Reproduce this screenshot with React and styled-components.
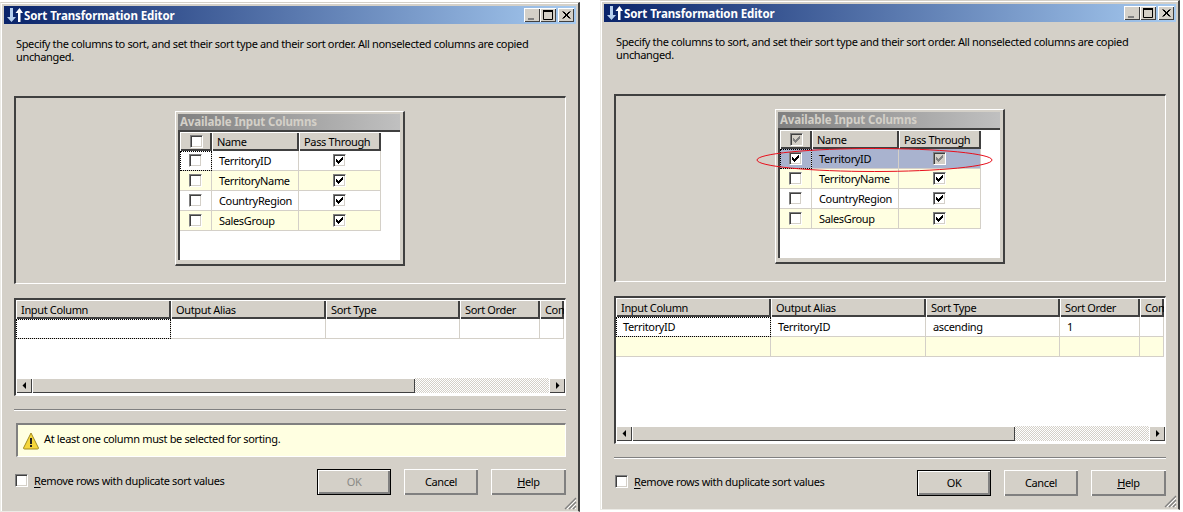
import React from "react";
import styled, { createGlobalStyle, css } from "styled-components";

const Global = createGlobalStyle`
  html, body { margin: 0; padding: 0; background: #fff; }
  body { font-family: "Noto Sans", "Open Sans", sans-serif; font-size: 11px; letter-spacing: -0.35px; color: #000; }
`;

const FACE = "#d4d0c8";
const DARK = "#404040";
const MID = "#808080";
const YELLOW = "#ffffe1";
const LINE = "#d4d0c8";

const Page = styled.div`
  display: flex;
  width: 1183px;
  height: 512px;
  overflow: hidden;
`;
const Dialog = styled.div`
  position: relative;
  box-sizing: border-box;
  flex: none;
  width: 580px;
  height: 510px;
  margin-top: ${(p) => p.$top}px;
  margin-right: 20px;
  padding: 3px 2px 0 3px;
  background: ${FACE};
  border-top: 1px solid ${FACE};
  border-left: 1px solid #ecebe6;
  border-right: 2px solid ${DARK};
  border-bottom: 1px solid #ecebe6;
  box-shadow: inset 1px 1px 0 #fff;
`;
const TitleBar = styled.div`
  display: flex;
  align-items: center;
  height: 18px;
  padding: 0 2px 0 3px;
  background: linear-gradient(90deg, #0a246a 0%, #a6caf0 100%);
  color: #fff;
  font-weight: 700;
  font-size: 11.5px;
  letter-spacing: -0.1px;
  gap: 1px;
`;
const TitleText = styled.span`
  flex: 1;
  white-space: nowrap;
`;
const CtlGroup = styled.div`
  display: flex;
`;
const CtlBtn = styled.div`
  box-sizing: border-box;
  width: 16px;
  height: 14px;
  margin-left: ${(p) => (p.$gap ? 2 : 0)}px;
  background: ${FACE};
  box-shadow: inset 1px 1px 0 #fff, inset -1px -1px 0 ${DARK};
  display: flex;
  align-items: center;
  justify-content: center;
`;
const Content = styled.div`
  padding: 13px 10px 0 10px;
`;
const Intro = styled.p`
  margin: 0 0 33px 2px;
  line-height: 13px;
  height: 26px;
  width: 535px;
`;
const Group = styled.div`
  box-sizing: border-box;
  height: 188px;
  padding: 13px 1px 0 0;
  display: flex;
  justify-content: center;
  align-items: flex-start;
  border-top: 2px solid ${DARK};
  border-left: 2px solid ${DARK};
  border-right: 1px solid #fff;
  border-bottom: 1px solid #fff;
`;
const ListWin = styled.div`
  box-sizing: border-box;
  width: 230px;
  height: 155px;
  padding: 2px 3px 3px 2px;
  background: ${FACE};
  border-top: 1px solid #fff;
  border-left: 1px solid #fff;
  border-right: 2px solid ${DARK};
  border-bottom: 2px solid ${DARK};
`;
const ListTitle = styled.div`
  height: 16px;
  line-height: 16px;
  padding-left: 2px;
  background: linear-gradient(90deg, #808080, #c0c0c0);
  color: ${FACE};
  font-weight: 700;
  font-size: 11.5px;
  letter-spacing: -0.15px;
  white-space: nowrap;
`;
const ListBody = styled.div`
  box-sizing: border-box;
  height: 130px;
  background: #fff;
  border-top: 2px solid ${DARK};
  border-left: 2px solid ${DARK};
`;
const Row = styled.div`
  display: flex;
  height: ${(p) => p.$h || 20}px;
`;
const Head = styled.div`
  box-sizing: border-box;
  flex: none;
  width: ${(p) => p.$w}px;
  display: flex;
  align-items: center;
  justify-content: ${(p) => (p.$center ? "center" : "flex-start")};
  padding-left: ${(p) => (p.$center ? 0 : p.$pad || 5)}px;
  padding-bottom: 1px;
  background: ${FACE};
  white-space: nowrap;
  overflow: hidden;
  box-shadow: inset 1px 1px 0 #fff, inset -2px -2px 0 ${DARK};
`;
const Cell = styled.div`
  box-sizing: border-box;
  flex: none;
  width: ${(p) => p.$w}px;
  display: flex;
  align-items: center;
  justify-content: ${(p) => (p.$center ? "center" : "flex-start")};
  padding-left: ${(p) => (p.$center ? 0 : p.$pad || 7)}px;
  white-space: nowrap;
  background: ${(p) => (p.$sel ? "#a9b3cf" : p.$alt ? YELLOW : "#fff")};
  border-right: 1px solid ${LINE};
  border-bottom: 1px solid ${LINE};
  ${(p) =>
    p.$focus &&
    css`
      outline: 1px dotted #000;
      outline-offset: -1px;
    `}
`;
const Box = styled.span`
  box-sizing: border-box;
  display: inline-flex;
  align-items: center;
  justify-content: center;
  width: 13px;
  height: 13px;
  background: ${(p) => (p.$dis ? FACE : "#fff")};
  border-top: 1px solid ${MID};
  border-left: 1px solid ${MID};
  border-right: 1px solid #fff;
  border-bottom: 1px solid #fff;
  box-shadow: inset 1px 1px 0 ${DARK}, inset -1px -1px 0 ${FACE};
  flex: none;
`;
const Grid = styled.div`
  box-sizing: border-box;
  height: ${(p) => p.$h}px;
  margin-top: 14px;
  display: flex;
  flex-direction: column;
  border-top: 2px solid ${DARK};
  border-left: 2px solid ${DARK};
  border-right: 1px solid #fff;
  border-bottom: 1px solid #fff;
  background: #fff;
`;
const GridRows = styled.div`
  flex: 1;
  overflow: hidden;
`;
const ScrollBar = styled.div`
  display: flex;
  height: 15px;
  margin-bottom: 2px;
  background: repeating-conic-gradient(#d4d0c8 0 25%, #fff 0 50%) 0 0 / 2px 2px;
`;
const ScrollBtn = styled.div`
  box-sizing: border-box;
  flex: none;
  width: 16px;
  height: 15px;
  display: flex;
  align-items: center;
  justify-content: center;
  background: ${FACE};
  box-shadow: inset 1px 1px 0 #fff, inset -1px -1px 0 ${DARK};
`;
const Thumb = styled(ScrollBtn)`
  width: 383px;
`;
const Spacer = styled.div`
  flex: 1;
`;
const Sep = styled.div`
  height: 1px;
  margin: 13px 0 12px;
  background: ${MID};
  border-bottom: 1px solid #fff;
`;
const Warning = styled.div`
  box-sizing: border-box;
  height: 34px;
  margin-left: 2px;
  display: flex;
  align-items: center;
  gap: 5px;
  padding-left: 5px;
  background: ${YELLOW};
  border-top: 2px solid ${MID};
  border-left: 2px solid ${MID};
  border-right: 1px solid #fff;
  border-bottom: 1px solid #fff;
`;
const WarnText = styled.span`
  padding-bottom: 4px;
`;
const Footer = styled.div`
  display: flex;
  align-items: center;
  height: 26px;
  margin-top: ${(p) => p.$mt}px;
  padding-left: 2px;
`;
const CheckLabel = styled.label`
  flex: 1;
  display: flex;
  align-items: center;
  gap: 6px;
  margin-left: -1px;
  padding-bottom: 4px;
  u { text-underline-offset: 2px; }
`;
const Button = styled.div`
  box-sizing: border-box;
  width: 74px;
  height: 26px;
  margin-left: 13px;
  padding-bottom: 1px;
  display: flex;
  align-items: center;
  justify-content: center;
  background: ${FACE};
  color: ${(p) => (p.$dis ? "#8a8a86" : "#000")};
  box-shadow: inset 1px 1px 0 #fff, inset -2px -2px 0 ${MID}, inset -1px -1px 0 ${DARK};
  &:last-child { width: 75px; }
  ${(p) =>
    p.$def &&
    css`
      border: 1px solid #000;
      box-shadow: inset 1px 1px 0 #fff, inset -2px -2px 0 ${MID};
    `}
`;
const Grip = styled.svg`
  position: absolute;
  right: 1px;
  bottom: 1px;
`;
const Ellipse = styled.svg`
  position: absolute;
  left: 154px;
  top: 146px;
  pointer-events: none;
`;

const Check = ({ color = "#000" }) => (
  <svg width="9" height="9" viewBox="0 0 9 9" shapeRendering="crispEdges">
    <path d="M1 3h1v1h1v1h1V4h1V3h1V2h1V1h1v3H7v1H6v1H5v1H4v1H3V7H2V6H1z" fill={color} />
  </svg>
);
const CheckBox = ({ on, dis }) => (
  <Box $dis={dis}>{on && <Check color={dis ? "#808080" : "#000"} />}</Box>
);

const SortIcon = () => (
  <svg width="16" height="14" viewBox="0 0 16 14">
    <path d="M3 0h3v9h3l-4.500 5L0 9h3z" fill="#b8d0ee" />
    <path d="M11 14V5H8.500L12.500 0 16 5h-2.500v9z" fill="#fff" />
  </svg>
);
const Controls = () => (
  <CtlGroup>
    <CtlBtn>
      <svg width="10" height="10" viewBox="0 0 10 10"><rect x="1" y="8" width="6" height="2" fill="#808080" /></svg>
    </CtlBtn>
    <CtlBtn>
      <svg width="10" height="10" viewBox="0 0 10 10"><path d="M0.500 1.500h9v8h-9z" fill="none" stroke="#000" /><rect y="0" width="10" height="2" /></svg>
    </CtlBtn>
    <CtlBtn $gap>
      <svg width="9" height="8" viewBox="0 0 9 8"><path d="M0.500 0.500l7 7M1.500 0.500l7 7M7.500 0.500l-7 7M8.500 0.500l-7 7" stroke="#000" /></svg>
    </CtlBtn>
  </CtlGroup>
);
const WarnIcon = () => (
  <svg width="16" height="18" viewBox="0 0 16 18">
    <path d="M8 1 L15.500 16 Q15.500 17 14.500 17 H1.500 Q0.500 17 0.500 16 Z" fill="#f5d63c" stroke="#a08a20" />
    <rect x="7" y="6" width="2" height="6" fill="#222" />
    <rect x="7" y="13" width="2" height="2" fill="#222" />
  </svg>
);
const Arrow = ({ dir }) => (
  <svg width="5" height="7" viewBox="0 0 5 7">
    <path d={dir === "l" ? "M4 0v7L0.500 3.500z" : "M1 0v7l3.500-3.500z"} fill="#000" />
  </svg>
);

const listCols = [32, 87, 82];
const names = ["TerritoryID", "TerritoryName", "CountryRegion", "SalesGroup"];
const gridCols = [155, 155, 134, 80, 24];
const gridHead = ["Input Column", "Output Alias", "Sort Type", "Sort Order", "Com"];

const FooterRow = ({ mt, dis }) => (
  <Footer $mt={mt}>
    <CheckLabel><CheckBox /><span><u>R</u>emove rows with duplicate sort values</span></CheckLabel>
    <Button $def $dis={dis}>OK</Button>
    <Button>Cancel</Button>
    <Button><span><u>H</u>elp</span></Button>
  </Footer>
);

const SortDialog = ({ top, selected }) => (
  <Dialog $top={top}>
    <TitleBar>
      <SortIcon />
      <TitleText>Sort Transformation Editor</TitleText>
      <Controls />
    </TitleBar>
    <Content>
      <Intro>
        Specify the columns to sort, and set their sort type and their sort order. All nonselected columns are copied unchanged.
      </Intro>
      <Group>
        <ListWin>
          <ListTitle>Available Input Columns</ListTitle>
          <ListBody>
            <Row $h={19}>
              <Head $w={listCols[0]} $center><CheckBox on={selected} dis={selected} /></Head>
              <Head $w={listCols[1]}>Name</Head>
              <Head $w={listCols[2]}>Pass Through</Head>
            </Row>
            {names.map((n, i) => {
              const sel = selected && i === 0;
              return (
                <Row key={n}>
                  <Cell $w={listCols[0]} $center $alt={i % 2 === 1} $sel={sel} $focus={i === 0}><CheckBox on={sel} /></Cell>
                  <Cell $w={listCols[1]} $alt={i % 2 === 1} $sel={sel}>{n}</Cell>
                  <Cell $w={listCols[2]} $center $alt={i % 2 === 1} $sel={sel}><CheckBox on dis={sel} /></Cell>
                </Row>
              );
            })}
          </ListBody>
        </ListWin>
      </Group>
      <Grid $h={selected ? 148 : 98}>
        <Row $h={19}>
          {gridHead.map((h, i) => <Head key={h} $w={gridCols[i]}>{h}</Head>)}
        </Row>
        <GridRows>
          <Row>
            {(selected ? ["TerritoryID", "TerritoryID", "ascending", "1", ""] : ["", "", "", "", ""]).map((v, i) => (
              <Cell key={i} $w={gridCols[i]} $focus={i === 0}>{v}</Cell>
            ))}
          </Row>
          {selected && (
            <Row>
              {gridCols.map((w, i) => <Cell key={i} $w={w} $alt />)}
            </Row>
          )}
        </GridRows>
        <ScrollBar>
          <ScrollBtn><Arrow dir="l" /></ScrollBtn>
          <Thumb />
          <Spacer />
          <ScrollBtn><Arrow dir="r" /></ScrollBtn>
        </ScrollBar>
      </Grid>
      <Sep />
      {selected ? (
        <FooterRow mt={-1} />
      ) : (
        <>
          <Warning><WarnIcon /><WarnText>At least one column must be selected for sorting.</WarnText></Warning>
          <FooterRow mt={12} dis />
        </>
      )}
    </Content>
    <Grip width="13" height="13" viewBox="0 0 13 13">
      <path d="M12 1L1 12M12 5L5 12M12 9L9 12" stroke="#808080" strokeWidth="1.300" />
      <path d="M12 3L3 12M12 7L7 12M12 11L11 12" stroke="#fff" />
    </Grip>
    {selected && (
      <Ellipse width="240" height="26" viewBox="0 0 240 26">
        <ellipse cx="119.500" cy="13" rx="117.500" ry="11.500" fill="none" stroke="#e8101c" />
      </Ellipse>
    )}
  </Dialog>
);

export default function App() {
  return (
    <Page>
      <Global />
      <SortDialog top={2} />
      <SortDialog top={0} selected />
    </Page>
  );
}
